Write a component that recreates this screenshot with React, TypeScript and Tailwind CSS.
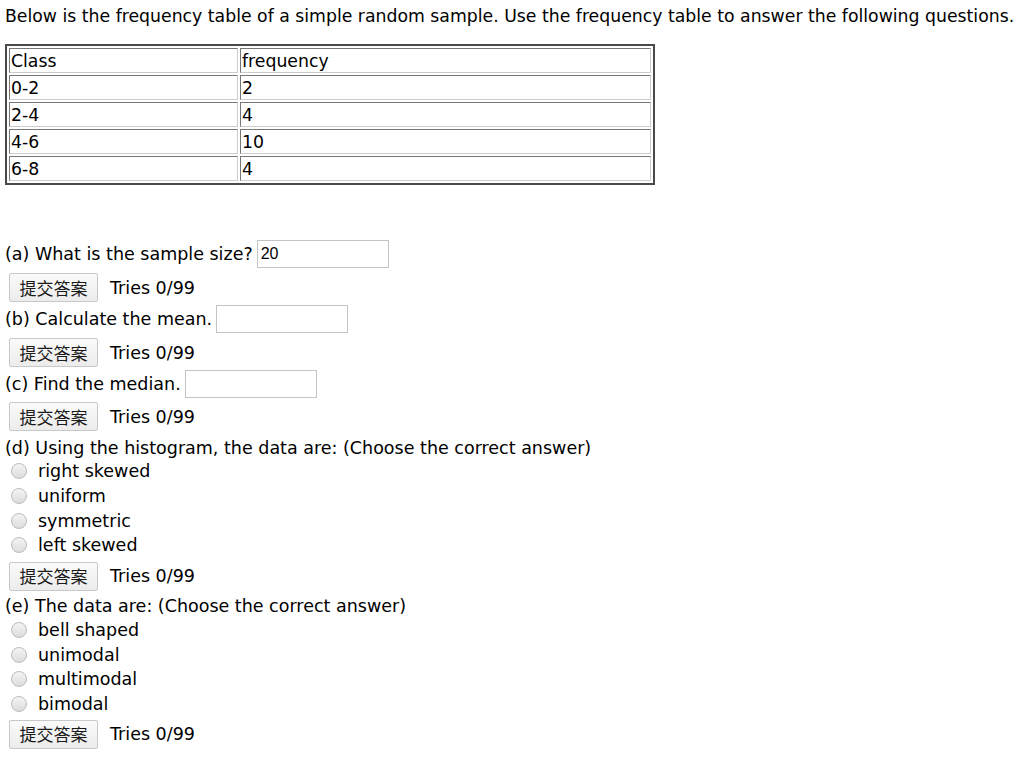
import React from "react";

const rows = [
  ["0-2", "2"],
  ["2-4", "4"],
  ["4-6", "10"],
  ["6-8", "4"],
];

function SubmitRow() {
  return (
    <div className="flex h-[29px] items-center">
      <button className="ml-1 h-[29px] w-[89px] rounded-[2px] border border-[#c8c8c8] bg-gradient-to-b from-[#fafafa] to-[#ececec] text-[17px] text-[#1a1a1a] [font-family:'Noto_Sans_CJK_SC',sans-serif]">
        提交答案
      </button>
      <span className="ml-3">Tries 0/99</span>
    </div>
  );
}

function Radio({ label }: { label: string }) {
  return (
    <div className="flex h-[24.7px] items-center">
      <span className="ml-[6px] mr-[11px] h-[16px] w-[16px] rounded-full border border-[#bcbcbc] bg-gradient-to-b from-[#f4f4f4] to-[#dcdcdc]" />
      <span>{label}</span>
    </div>
  );
}

function Question({ label, value }: { label: string; value?: string }) {
  return (
    <div className="flex h-[28px] items-center">
      <span>{label}</span>
      <input
        readOnly
        value={value ?? ""}
        className="ml-1 h-[28px] w-[132px] border border-[#c4c4c4] bg-white px-[3px] text-[16px] text-black outline-none [font-family:'Liberation_Sans',Arial,sans-serif]"
      />
    </div>
  );
}

const cell =
  "h-[25px] border border-t-[#777] border-l-[#777] border-b-[#ccc] border-r-[#ccc] px-px";

export default function App() {
  return (
    <div className="min-h-[766px] bg-white px-[5px] text-[17.3px] leading-[22px] text-black [font-family:'DejaVu_Sans',Verdana,sans-serif]">
      <p className="pt-[5px]">
        Below is the frequency table of a simple random sample. Use the frequency table to answer the following questions.
      </p>

      <table className="mt-[17px] w-[650px] border-separate border-spacing-0.5 border-2 border-[#4a4a4a]">
        <tbody>
          <tr>
            <td className={`${cell} w-[229px]`}>Class</td>
            <td className={cell}>frequency</td>
          </tr>
          {rows.map(([c, f]) => (
            <tr key={c}>
              <td className={cell}>{c}</td>
              <td className={cell}>{f}</td>
            </tr>
          ))}
        </tbody>
      </table>

      <div className="mt-[55px] flex flex-col text-[17.5px]">
        <Question label="(a) What is the sample size?" value="20" />
        <div className="mt-[5px]"><SubmitRow /></div>
        <div className="mt-[3px]"><Question label="(b) Calculate the mean." /></div>
        <div className="mt-[5px]"><SubmitRow /></div>
        <div className="mt-[3px]"><Question label="(c) Find the median." /></div>
        <div className="mt-[4px]"><SubmitRow /></div>
        <div className="mt-[6px] flex h-[22px] items-center">(d) Using the histogram, the data are: (Choose the correct answer)</div>
        <div className="flex flex-col">
          <Radio label="right skewed" />
          <Radio label="uniform" />
          <Radio label="symmetric" />
          <Radio label="left skewed" />
        </div>
        <div className="mt-[4px]"><SubmitRow /></div>
        <div className="mt-[4px] flex h-[22px] items-center">(e) The data are: (Choose the correct answer)</div>
        <div className="mt-[1px] flex flex-col">
          <Radio label="bell shaped" />
          <Radio label="unimodal" />
          <Radio label="multimodal" />
          <Radio label="bimodal" />
        </div>
        <div className="mt-[3px]"><SubmitRow /></div>
      </div>
    </div>
  );
}
